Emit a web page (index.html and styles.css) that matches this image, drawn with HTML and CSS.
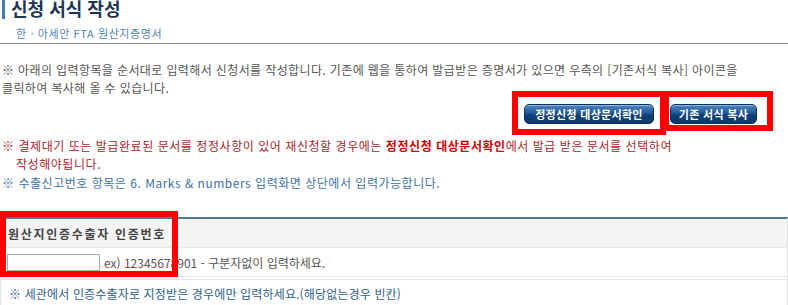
FILE: index.html
```html
<!DOCTYPE html>
<html lang="ko">
<head>
 <meta charset="UTF-8">
 <title>신청 서식 작성</title>
 <link rel="stylesheet" href="styles.css">
</head>
<body>
<div class="page-head">
 <h1 class="page-title">신청 서식 작성</h1>
 <p class="page-sub">한 · 아세안 FTA 원산지증명서</p>
</div>

<p class="guide">※ 아래의 입력항목을 순서대로 입력해서 신청서를 작성합니다. 기존에 웹을 통하여 발급받은 증명서가 있으면 우측의 [기존서식 복사] 아이콘을<br>클릭하여 복사해 올 수 있습니다.</p>

<div class="btn-row">
 <div class="mark mark-first"><button class="btn">정정신청 대상문서확인</button></div>
 <div class="mark mark-second"><button class="btn">기존 서식 복사</button></div>
</div>

<p class="notice-red">※ 결제대기 또는 발급완료된 문서를 정정사항이 있어 재신청할 경우에는 <strong>정정신청 대상문서확인</strong>에서 발급 받은 문서를 선택하여<br><span class="indent">작성해야됩니다.</span></p>
<p class="notice-blue">※ 수출신고번호 항목은 6. Marks &amp; numbers 입력화면 상단에서 입력가능합니다.</p>

<div class="form-table">
 <div class="row row-head">원산지인증수출자 인증번호</div>
 <div class="row row-input">
  <input type="text" class="cert-no">
  <span class="example">ex) 12345678901 - 구분자없이 입력하세요.</span>
 </div>
 <div class="row row-note">※ 세관에서 인증수출자로 지정받은 경우에만 입력하세요.(해당없는경우 빈칸)</div>
 <div class="mark-box"></div>
</div>
</body>
</html>
```

FILE: styles.css
```css
body {
  margin: 0;
  padding: 0;
  background-color: #ffffff;
  font-family: "Noto Sans CJK KR", "Noto Sans", sans-serif;
  font-size: 12px;
  letter-spacing: 0.38px;
  color: #555;
  overflow: hidden;
}
.page-head {
  border-bottom: 1px solid #7d8d99;
  height: 45px;
  margin-top: -2px;
}
.page-title {
  margin: 0 0 0 2px;
  padding-left: 6px;
  border-left: 3px solid #3f7fb6;
  font-size: 18px;
  line-height: 21px;
  font-weight: bold;
  letter-spacing: 0;
  color: #1d3553;
}
.page-sub {
  margin: 7px 0 0 16px;
  font-size: 11px;
  line-height: 14px;
  letter-spacing: 0.6px;
  color: #4f82b3;
}
.guide {
  margin: 17px 0 0 2px;
  line-height: 18px;
}
.btn-row {
  display: flex;
  justify-content: flex-end;
  padding-right: 15px;
  margin-top: -6px;
}
.mark {
  border: 6px solid #ff0000;
  display: flex;
  align-items: flex-start;
}
.mark-first {
  width: 136px;
  height: 25px;
  padding: 7px 0 0 6px;
}
.mark-second {
  margin-left: -3px;
  width: 87px;
  height: 21px;
  padding: 7px 10px 0 1px;
}
.btn {
  height: 20px;
  border: 1px solid #0b2d57;
  border-radius: 5px;
  background: linear-gradient(#4f86c1 0%, #1f5896 45%, #0f3f78 55%, #0c3a6e 100%);
  box-shadow: inset 0 1px 0 #8fb6de;
  color: #fff;
  font-family: "Noto Sans CJK KR", sans-serif;
  font-size: 11px;
  font-weight: bold;
  letter-spacing: 0.3px;
  padding: 0;
  cursor: pointer;
}
.mark-first .btn {
  width: 130px;
}
.mark-second .btn {
  width: 87px;
}
.notice-red {
  margin: 2px 0 0 2px;
  line-height: 18px;
  letter-spacing: 0.55px;
  color: #a8262b;
}
.notice-red strong {
  color: #d10000;
}
.indent {
  padding-left: 14px;
}
.notice-blue {
  margin: 1px 0 0 2px;
  line-height: 18px;
  letter-spacing: 0.52px;
  color: #3d72a4;
}
.form-table {
  position: relative;
  margin-top: 25px;
  border-top: 2px solid #4b7b90;
  border-right: 1px solid #e4e4e4;
}
.row {
  display: flex;
  align-items: center;
  border-bottom: 1px solid #e6e6e6;
}
.row-head {
  height: 28px;
  background-color: #f4f4f4;
  padding-left: 8px;
  font-weight: bold;
  letter-spacing: 1.7px;
  color: #444;
}
.row-input {
  height: 28px;
  padding-left: 7px;
}
.cert-no {
  width: 89px;
  height: 13px;
  border: 1px solid #a9a9a9;
  padding: 1px;
  margin: 0 4px 0 0;
}
.example {
  color: #555;
  letter-spacing: 0;
}
.row-note {
  margin-top: 2px;
  height: 26px;
  padding-left: 8px;
  border-top: 1px solid #e6e6e6;
  border-left: 1px solid #e6e6e6;
  letter-spacing: 0.15px;
  color: #2f5f8e;
}
.mark-box {
  position: absolute;
  left: 0;
  top: -8px;
  width: 166px;
  height: 54px;
  border: 6px solid #ff0000;
}
```
